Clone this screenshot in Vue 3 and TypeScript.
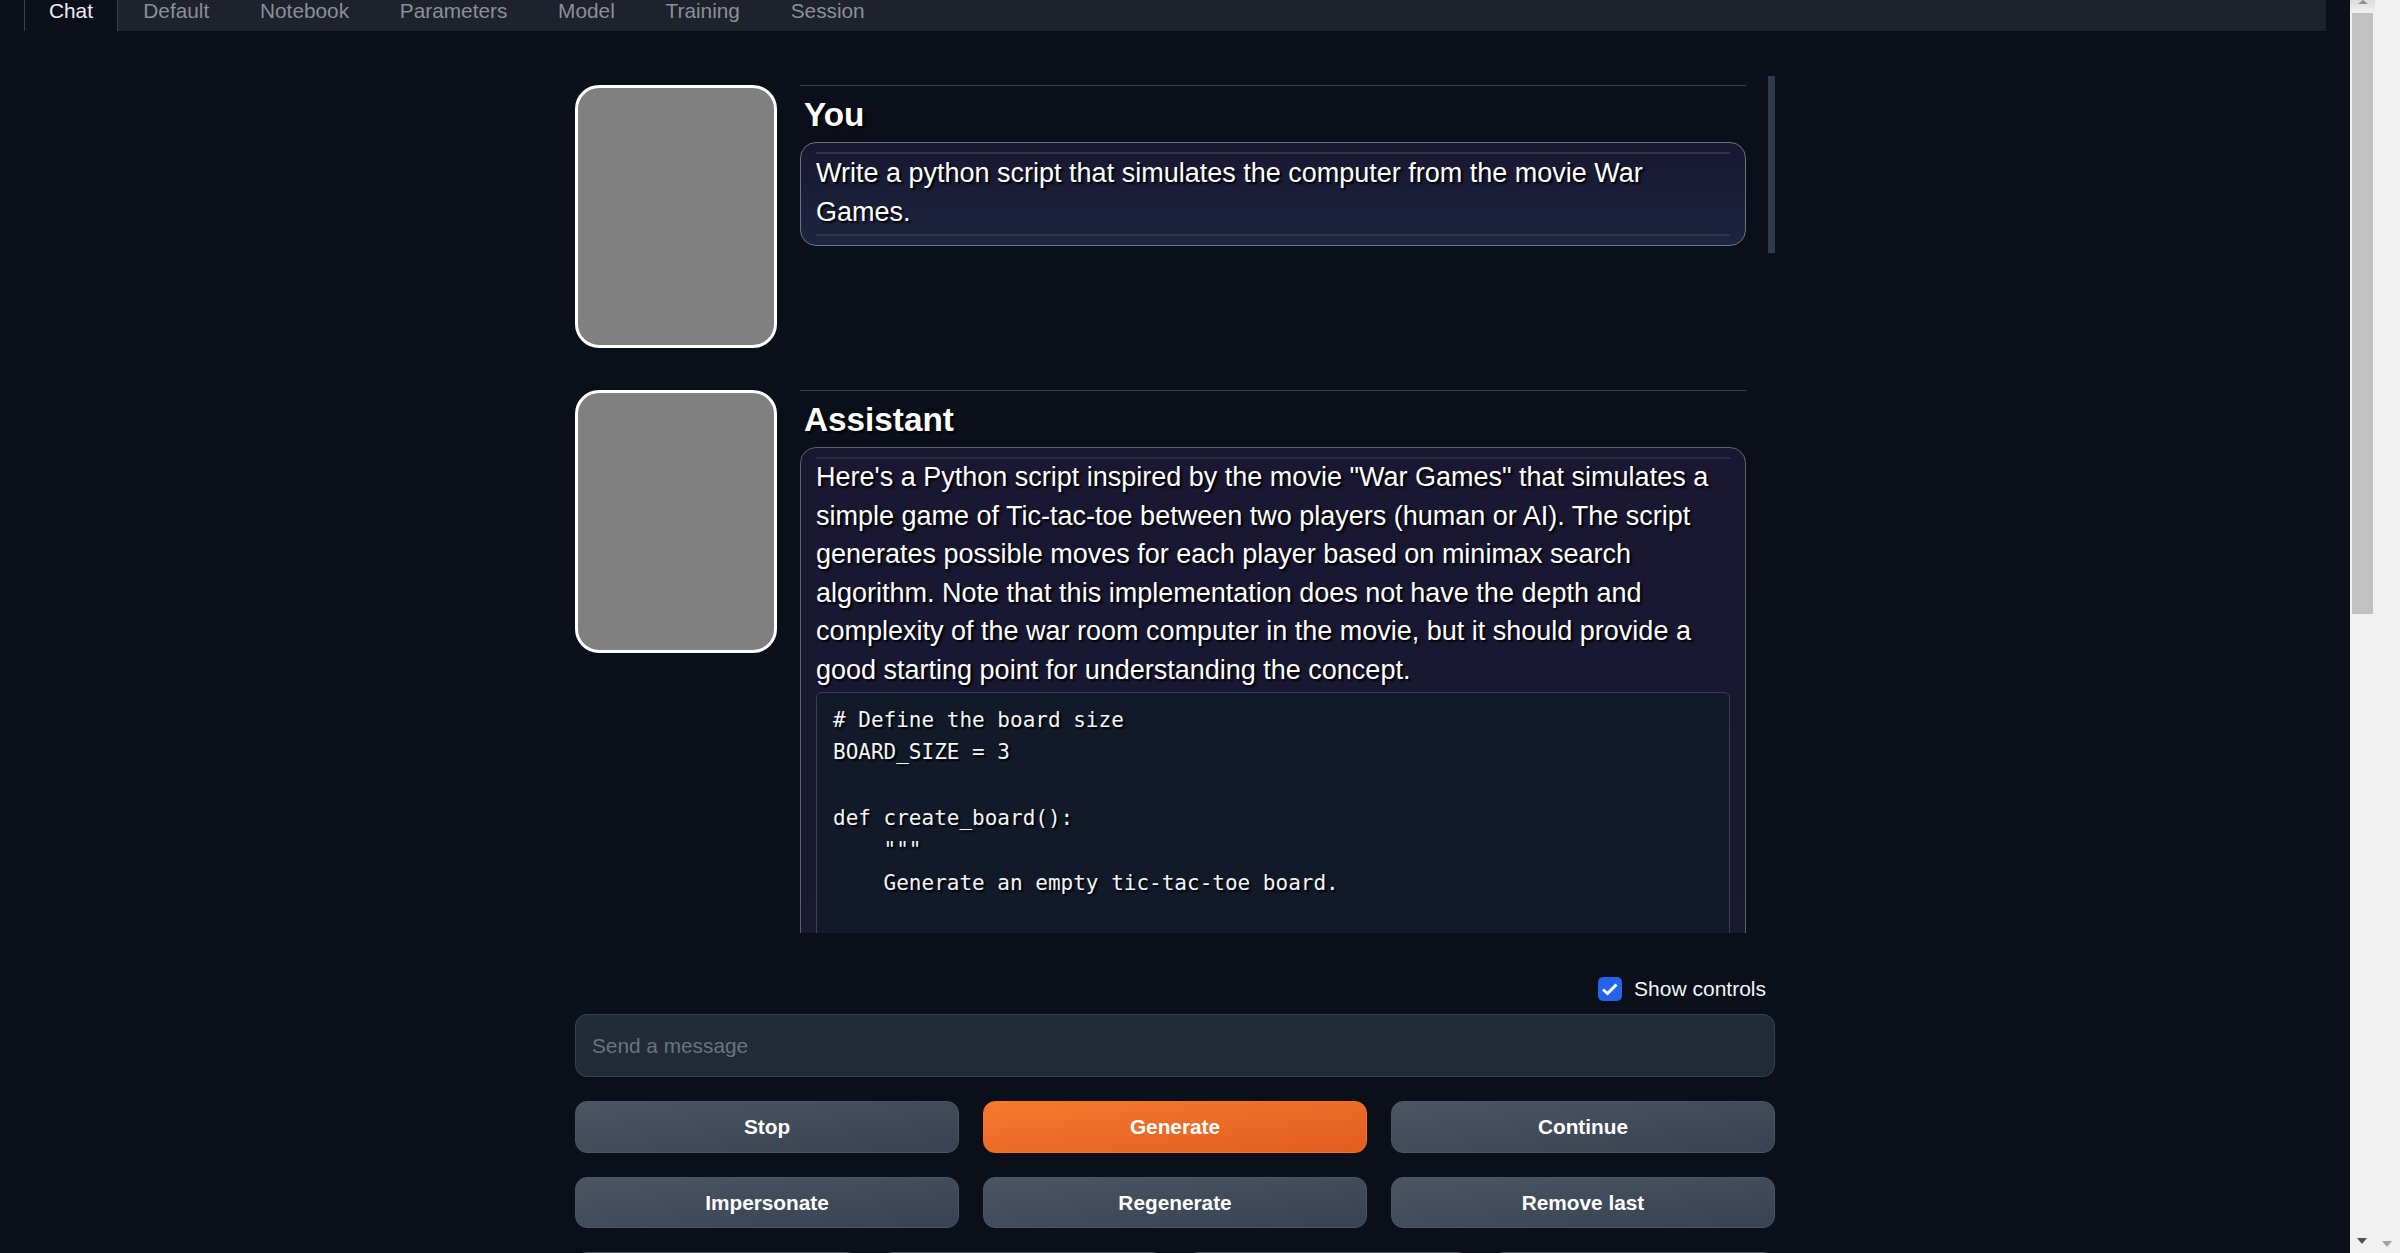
<script setup lang="ts">
const tabs: string[] = ['Chat', 'Default', 'Notebook', 'Parameters', 'Model', 'Training', 'Session']

const answer =
  'Here\'s a Python script inspired by the movie "War Games" that simulates a simple game of Tic-tac-toe between two players (human or AI). The script generates possible moves for each player based on minimax search algorithm. Note that this implementation does not have the depth and complexity of the war room computer in the movie, but it should provide a good starting point for understanding the concept.'

const code = `# Define the board size
BOARD_SIZE = 3

def create_board():
    """
    Generate an empty tic-tac-toe board.`

const rowOne = [
  { label: 'Stop', primary: false },
  { label: 'Generate', primary: true },
  { label: 'Continue', primary: false }
]
const rowTwo: string[] = ['Impersonate', 'Regenerate', 'Remove last']
</script>

<template>
  <div class="shell">
    <div class="page">
      <nav class="tab-nav">
        <button v-for="(tab, i) in tabs" :key="tab" class="tab" :class="{ selected: i === 0 }">{{ tab }}</button>
      </nav>

      <main class="column">
        <section class="chat">
          <div class="chat-thumb"></div>

          <article class="message">
            <div class="avatar"></div>
            <div class="content">
              <h2 class="username">You</h2>
              <div class="bubble user">
                <div class="body">
                  <p>Write a python script that simulates the computer from the movie War Games.</p>
                </div>
              </div>
            </div>
          </article>

          <article class="message">
            <div class="avatar"></div>
            <div class="content">
              <h2 class="username">Assistant</h2>
              <div class="bubble bot">
                <div class="body">
                  <p>{{ answer }}</p>
                  <pre class="code">{{ code }}</pre>
                </div>
              </div>
            </div>
          </article>
        </section>

        <label class="show-controls">
          <span class="check">
            <svg width="24" height="24" viewBox="0 0 24 24" fill="none">
              <path d="M5 12.5 9.5 16.5 18.5 7.5" stroke="#fff" stroke-width="3" />
            </svg>
          </span>
          Show controls
        </label>

        <input class="prompt" type="text" placeholder="Send a message" />

        <div class="btn-row three first">
          <button v-for="b in rowOne" :key="b.label" class="btn" :class="{ primary: b.primary }">{{ b.label }}</button>
        </div>
        <div class="btn-row three">
          <button v-for="label in rowTwo" :key="label" class="btn">{{ label }}</button>
        </div>
        <div class="btn-row four">
          <button v-for="n in 4" :key="n" class="btn"></button>
        </div>
      </main>
    </div>

    <div class="scrollbar">
      <div class="sb-up"><span class="tri up"></span></div>
      <div class="sb-thumb"></div>
      <span class="tri down dark"></span>
    </div>
    <div class="scrollbar idle">
      <span class="tri down"></span>
    </div>
  </div>
</template>

<style>
html,
body {
  margin: 0;
  height: 100%;
  overflow: hidden;
  background: #0b0f19;
}
</style>

<style scoped>
.shell {
  display: flex;
  height: 1253px;
  overflow: hidden;
  font-family: "Liberation Sans", Arial, sans-serif;
}

.page {
  flex: 1;
  min-width: 0;
  background: #0b0f19;
  overflow: hidden;
}

.tab-nav {
  display: flex;
  height: 31px;
  margin: 0 24px;
  background: #1e222c;
}

.tab {
  height: 31px;
  padding: 0 25.4px 9px;
  border: 0;
  background: none;
  font: 20.8px/22px "Liberation Sans", Arial, sans-serif;
  color: #8b8f99;
}

.tab.selected {
  padding: 0 24px 9px;
  border-left: 1px solid #374151;
  border-right: 1px solid #374151;
  background: #0b0f19;
  color: #eceef1;
}

.column {
  width: 1200px;
  margin: 45px auto 0;
}

.chat {
  position: relative;
  height: 857px;
  padding: 9px 29px 0 0;
  box-sizing: border-box;
  overflow: hidden;
}

.chat-thumb {
  position: absolute;
  top: 0;
  right: 0;
  width: 7px;
  height: 177px;
  background: #303a4d;
}

.message {
  display: flex;
  gap: 23px;
  margin-bottom: 42px;
}

.avatar {
  flex: none;
  width: 202px;
  height: 263px;
  box-sizing: border-box;
  border: 3px solid #fff;
  border-radius: 24px;
  background: #808080;
}

.content {
  flex: 1;
  min-width: 0;
  border-top: 1px solid #374151;
}

.username {
  margin: 0;
  padding-left: 4px;
  height: 56px;
  font-size: 33.3px;
  line-height: 57px;
  font-weight: 700;
  color: #fff;
  text-shadow: 2px 2px 2px #000;
}

.bubble {
  padding: 9px 15px 9px;
  border: 1px solid #6b7280;
  border-radius: 16px;
  background: linear-gradient(180deg, #191731, #1c2440);
}

.bubble.bot {
  min-height: 900px;
  background: linear-gradient(180deg, #191731, #191a35 800px);
  border-color: #5b6270;
}

.body {
  border-top: 2px solid #32334a;
  border-bottom: 2px solid #32334a;
}

.bot .body {
  border-color: #2a2a42;
}

.body p {
  margin: 0 0 3px;
  font-size: 27px;
  line-height: 38.6px;
  color: #fff;
  text-shadow: 2px 2px 2px #000;
}

.bot .body p {
  margin: -1px 0 2px;
}

.code {
  margin: 0;
  min-height: 600px;
  padding: 11px 16px;
  border: 1px solid #374151;
  border-radius: 6px;
  background: #121a29;
  font-family: "DejaVu Sans Mono", monospace;
  font-size: 21px;
  line-height: 32.7px;
  color: #f3f4f6;
  text-shadow: 2px 2px 2px #000;
}

.show-controls {
  display: flex;
  align-items: center;
  justify-content: flex-end;
  gap: 12px;
  height: 24px;
  margin: 44px 9px 0 0;
  font-size: 21px;
  color: #f3f4f6;
}

.check {
  width: 24px;
  height: 24px;
  border-radius: 5px;
  background: #2563eb;
}

.check svg {
  display: block;
}

.prompt {
  display: block;
  width: 100%;
  height: 63px;
  margin-top: 13px;
  padding: 0 16px;
  box-sizing: border-box;
  border: 1px solid #374151;
  border-radius: 12px;
  background: #212a37;
  font-family: inherit;
  font-size: 20.8px;
  color: #fff;
  outline: none;
}

.prompt::placeholder {
  color: #6b7280;
  opacity: 1;
}

.btn-row {
  display: grid;
  margin-top: 24px;
}

.btn-row.three {
  grid-template-columns: repeat(3, 1fr);
  gap: 24px;
}

.btn-row.four {
  grid-template-columns: repeat(4, 1fr);
  gap: 22px;
}

.btn {
  height: 51px;
  border: 1px solid #4b5563;
  border-radius: 12px;
  background: linear-gradient(to bottom right, #4b5563, #374151);
  font-family: inherit;
  font-size: 20.8px;
  font-weight: 700;
  color: #fff;
}

.first .btn {
  height: 52px;
}

.btn.primary {
  border-color: #f97316;
  background: linear-gradient(to bottom right, #f6792f, #e15d20);
}

.scrollbar {
  position: relative;
  flex: none;
  width: 25px;
  background: #f1f1f1;
}

.sb-up {
  height: 13px;
  display: flex;
  justify-content: center;
  background: linear-gradient(180deg, #dcdcdc, #f1f1f1);
}

.sb-thumb {
  width: 21px;
  height: 601px;
  margin: 0 auto;
  background: #c1c1c1;
}

.tri {
  display: block;
  width: 0;
  height: 0;
  border-left: 5.5px solid transparent;
  border-right: 5.5px solid transparent;
}

.tri.up {
  border-bottom: 4px solid #8f8f8f;
}

.tri.down {
  position: absolute;
  left: 7px;
  top: 1241px;
  border-top: 6px solid #a3a3a3;
}

.tri.down.dark {
  top: 1238px;
  border-top-color: #505050;
}
</style>
